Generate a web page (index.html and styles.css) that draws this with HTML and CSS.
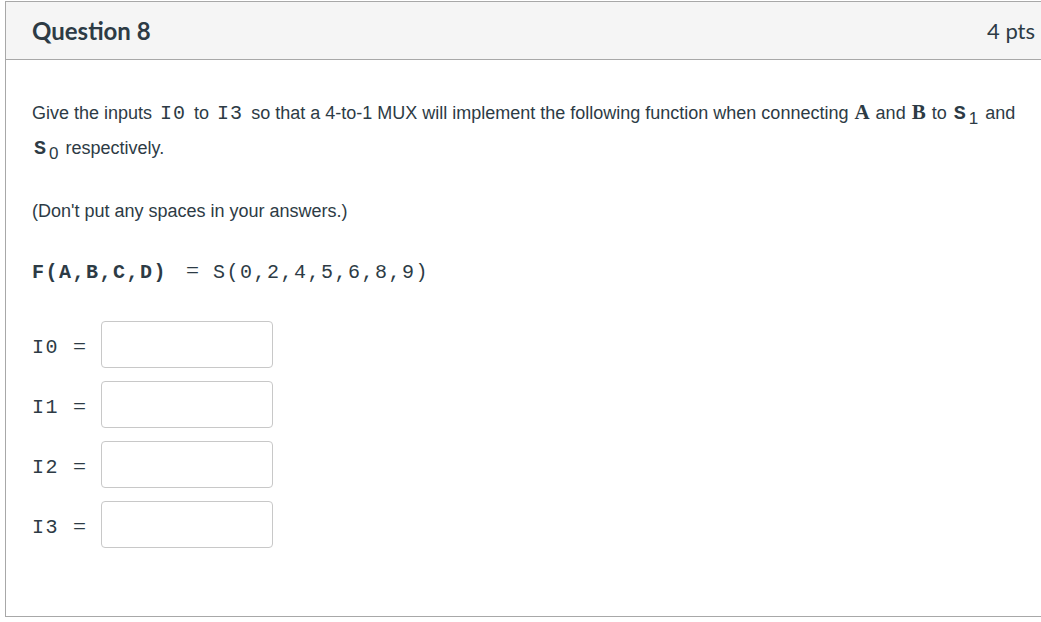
FILE: index.html
```html
<!DOCTYPE html>
<html>
<head>
<meta charset="utf-8">
<link rel="stylesheet" href="styles.css">
</head>
<body>
<div class="question">
  <div class="q-header">
    <span class="q-title">Question 8</span>
    <span class="q-pts">4 pts</span>
  </div>
  <div class="q-body">
    <p class="para first">Give the inputs <span class="tt">I0</span> to <span class="tt">I3</span> so that a 4-to-1 MUX will implement the following function when connecting <span class="bf">A</span> and <span class="bf">B</span> to <span class="tt sel">S<sub>1</sub></span> and <span class="tt sel">S<sub>0</sub></span> respectively.</p>
    <p class="para">(Don't put any spaces in your answers.)</p>
    <p class="func"><span class="ttb">F(A,B,C,D)</span> <span class="eq">=</span> <span class="tt">S(0,2,4,5,6,8,9)</span></p>
    <div class="answers">
      <div class="row"><span class="lbl">I0</span><span class="eq">=</span><span class="box"></span></div>
      <div class="row"><span class="lbl">I1</span><span class="eq">=</span><span class="box"></span></div>
      <div class="row"><span class="lbl">I2</span><span class="eq">=</span><span class="box"></span></div>
      <div class="row"><span class="lbl">I3</span><span class="eq">=</span><span class="box"></span></div>
    </div>
  </div>
</div>
</body>
</html>
```
FILE: styles.css
```css
html, body {
  margin: 0;
  padding: 0;
  background: #ffffff;
}
body {
  font-family: "Liberation Sans", Arial, sans-serif;
  color: #2d3b45;
}
.question {
  margin: 1px 0 0 5px;
  width: 1060px;
  border: 1px solid #a8a8a8;
  box-sizing: border-box;
  height: 616px;
}
.q-header {
  background: #f5f5f5;
  height: 57px;
  border-bottom: 1px solid #a8a8a8;
  display: flex;
  align-items: center;
  justify-content: space-between;
  padding: 0 29px 0 26px;
  font-family: Lato, sans-serif;
  font-weight: 700;
  font-size: 24px;
  color: #2d3b45;
}
.q-pts {
  font-weight: 400;
  font-size: 22px;
}
.q-body {
  padding: 0 40px 0 26px;
  font-size: 18px;
}
.para {
  margin: 0;
  line-height: 35px;
}
.para.first {
  padding-top: 35px;
}
.para + .para {
  margin-top: 28px;
}
.tt, .ttb, .lbl {
  font-family: "Liberation Mono", "Courier New", monospace;
  font-size: 20px;
}
.tt {
  margin: 0 3px;
  letter-spacing: 1px;
}
.tt.sel {
  font-weight: 700;
  margin: 0 2px;
}
.tt sub {
  font-family: "Liberation Sans", Arial, sans-serif;
  font-weight: 400;
  font-size: 17px;
  letter-spacing: 0;
  vertical-align: -5px;
  line-height: 0;
  margin-left: 2px;
}
.ttb {
  font-weight: 700;
}
.bf {
  font-family: "Liberation Serif", serif;
  font-weight: 700;
  font-size: 21px;
  margin: 0 1px;
}
.eq {
  font-family: "Liberation Serif", serif;
  font-size: 23px;
}
.func {
  margin: 30px 0 0;
  line-height: 24px;
}
.func .tt, .func .ttb {
  letter-spacing: 1.5px;
  margin: 0;
}
.func .eq {
  margin: 0 9px 0 14px;
}
.answers {
  margin-top: 36px;
  display: flex;
  flex-direction: column;
  gap: 13px;
}
.row {
  display: flex;
  align-items: center;
  height: 47px;
}
.lbl {
  width: 41px;
  letter-spacing: 1.5px;
  padding-top: 5px;
}
.row .eq {
  width: 28px;
  padding-top: 5px;
}
.box {
  width: 172px;
  height: 47px;
  box-sizing: border-box;
  border: 1px solid #c8c8c8;
  border-radius: 4px;
  background: #fff;
}
```
